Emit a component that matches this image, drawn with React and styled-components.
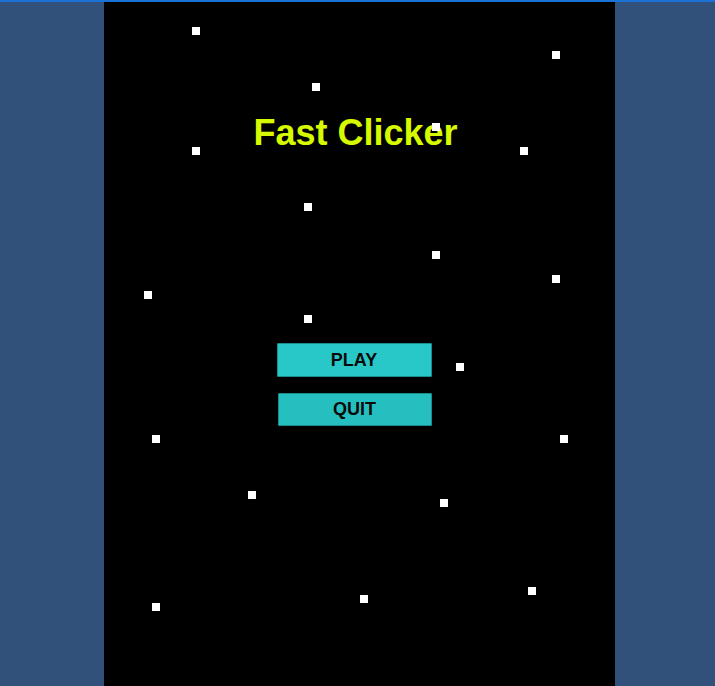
import React from "react";
import styled, { createGlobalStyle } from "styled-components";

const Global = createGlobalStyle`
  html, body { margin: 0; padding: 0; }
  body {
    background: #31507a;
    font-family: "Liberation Sans", Arial, sans-serif;
    overflow: hidden;
  }
`;

const Screen = styled.div`
  width: 715px;
  height: 686px;
  display: flex;
  flex-direction: column;
  background: #31507a;
`;

const TopBar = styled.div`
  height: 2px;
  background: #1a72d6;
  flex: none;
`;

const Body = styled.div`
  flex: 1;
  display: flex;
`;

const Side = styled.div`
  width: ${(p) => p.$w}px;
  flex: none;
  background: #31507a;
`;

const Canvas = styled.div`
  position: relative;
  width: 511px;
  flex: none;
  background: #000;
  display: flex;
  flex-direction: column;
  align-items: center;
  padding: 110px 9px 0 0;
  box-sizing: border-box;
`;

const Star = styled.div`
  position: absolute;
  width: 8px;
  height: 8px;
  background: #fff;
`;

const Title = styled.h1`
  margin: 0 0 0 1px;
  font-size: 36px;
  line-height: 41px;
  font-weight: 700;
  color: #d6fa00;
  position: relative;
  z-index: 1;
`;

const Menu = styled.div`
  margin-top: 190px;
  margin-right: 2px;
  display: flex;
  flex-direction: column;
  align-items: center;
  gap: 16px;
  position: relative;
  z-index: 1;
`;

const Button = styled.button`
  width: ${(p) => p.$w}px;
  height: ${(p) => p.$h}px;
  margin-left: ${(p) => p.$offset || 0}px;
  background: ${(p) => p.$bg};
  border: 1px solid #1a8e8e;
  border-radius: 1px;
  color: #0a0a0a;
  font-family: "Liberation Sans", Arial, sans-serif;
  font-weight: 700;
  font-size: 18px;
  padding: 0;
  cursor: pointer;
`;

const stars = [
  [195, 31], [555, 55], [315, 87], [435, 127], [195, 151], [523, 151],
  [307, 207], [435, 255], [555, 279], [147, 295], [307, 319], [459, 367],
  [155, 439], [563, 439], [251, 495], [443, 503], [531, 591], [155, 607],
  [363, 599],
];

export default function App() {
  return (
    <>
      <Global />
      <Screen>
        <TopBar />
        <Body>
          <Side $w={104} />
          <Canvas>
            {stars.map(([x, y], i) => (
              <Star
                key={i}
                style={{ left: x - 104 - 3, top: y - 2 - 4, zIndex: i === 3 ? 2 : 0 }}
              />
            ))}
            <Title>Fast Clicker</Title>
            <Menu>
              <Button $w={155} $h={34} $bg="#29c8c8">PLAY</Button>
              <Button $w={154} $h={33} $offset={1} $bg="#26bfbf">QUIT</Button>
            </Menu>
          </Canvas>
          <Side $w={100} />
        </Body>
      </Screen>
    </>
  );
}
